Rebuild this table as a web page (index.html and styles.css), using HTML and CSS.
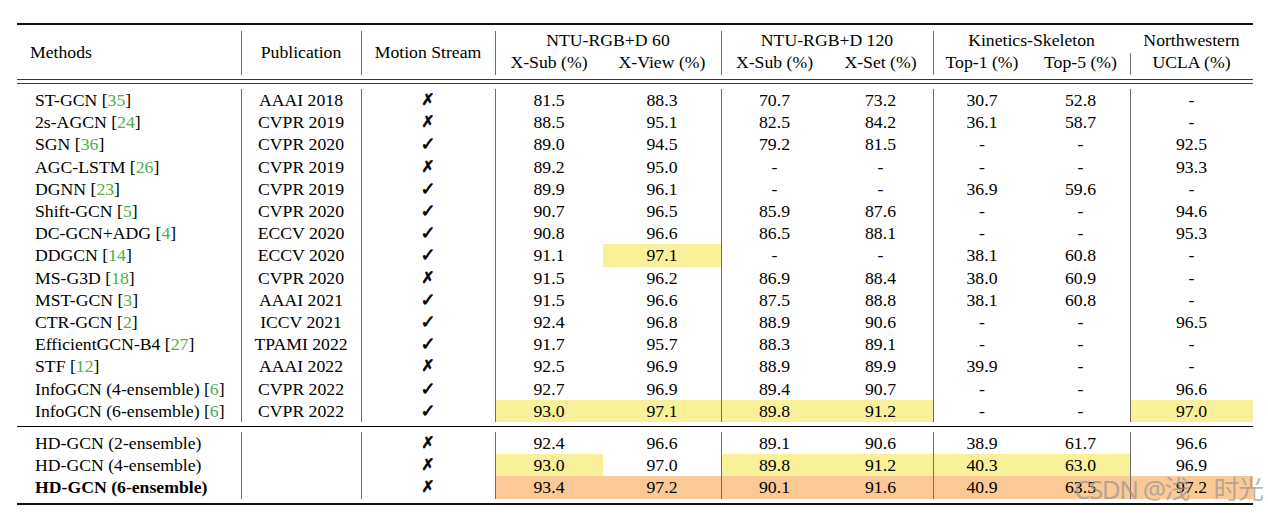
FILE: index.html
```html
<!DOCTYPE html>
<html lang="en">
<head>
<meta charset="utf-8">
<title>Skeleton action recognition results</title>
<link rel="stylesheet" href="styles.css">
</head>
<body>
<div class="page">
<table class="results">
<colgroup>
<col class="c-meth"><col class="c-pub"><col class="c-mot">
<col class="c-n60a"><col class="c-n60b"><col class="c-n120a"><col class="c-n120b">
<col class="c-k1"><col class="c-k5"><col class="c-ucla">
</colgroup>
<tbody>
<tr class="rule thick"><td colspan="10"></td></tr>
<tr class="sp sp6"><td colspan="10"></td></tr>
<tr class="head">
<th rowspan="2" class="h-meth">Methods</th>
<th rowspan="2" class="vl h-span">Publication</th>
<th rowspan="2" class="vl h-span">Motion Stream</th>
<th colspan="2" class="vl">NTU-RGB+D 60</th>
<th colspan="2" class="vl">NTU-RGB+D 120</th>
<th colspan="2" class="vl">Kinetics-Skeleton</th>
<th>Northwestern</th>
</tr>
<tr class="head">
<th class="vl">X-Sub (%)</th><th>X-View (%)</th>
<th class="vl">X-Sub (%)</th><th>X-Set (%)</th>
<th class="vl">Top-1 (%)</th><th>Top-5 (%)</th>
<th class="vl">UCLA (%)</th>
</tr>
<tr class="sp sp4"><td colspan="10"></td></tr>
<tr class="rule thin"><td colspan="10"></td></tr>
<tr class="sp sp3"><td colspan="10"></td></tr>
<tr class="rule thin"><td colspan="10"></td></tr>
<tr class="sp sp5"><td colspan="10"></td></tr>

<tr class="row"><td class="meth">ST-GCN <span class="cite">[<b>35</b>]</span></td><td class="vl">AAAI 2018</td><td class="vl mark x">✗</td><td class="vl">81.5</td><td>88.3</td><td class="vl">70.7</td><td>73.2</td><td class="vl">30.7</td><td>52.8</td><td class="vl">-</td></tr>
<tr class="row"><td class="meth">2s-AGCN <span class="cite">[<b>24</b>]</span></td><td class="vl">CVPR 2019</td><td class="vl mark x">✗</td><td class="vl">88.5</td><td>95.1</td><td class="vl">82.5</td><td>84.2</td><td class="vl">36.1</td><td>58.7</td><td class="vl">-</td></tr>
<tr class="row"><td class="meth">SGN <span class="cite">[<b>36</b>]</span></td><td class="vl">CVPR 2020</td><td class="vl mark ok">✓</td><td class="vl">89.0</td><td>94.5</td><td class="vl">79.2</td><td>81.5</td><td class="vl">-</td><td>-</td><td class="vl">92.5</td></tr>
<tr class="row"><td class="meth">AGC-LSTM <span class="cite">[<b>26</b>]</span></td><td class="vl">CVPR 2019</td><td class="vl mark x">✗</td><td class="vl">89.2</td><td>95.0</td><td class="vl">-</td><td>-</td><td class="vl">-</td><td>-</td><td class="vl">93.3</td></tr>
<tr class="row"><td class="meth">DGNN <span class="cite">[<b>23</b>]</span></td><td class="vl">CVPR 2019</td><td class="vl mark ok">✓</td><td class="vl">89.9</td><td>96.1</td><td class="vl">-</td><td>-</td><td class="vl">36.9</td><td>59.6</td><td class="vl">-</td></tr>
<tr class="row"><td class="meth">Shift-GCN <span class="cite">[<b>5</b>]</span></td><td class="vl">CVPR 2020</td><td class="vl mark ok">✓</td><td class="vl">90.7</td><td>96.5</td><td class="vl">85.9</td><td>87.6</td><td class="vl">-</td><td>-</td><td class="vl">94.6</td></tr>
<tr class="row"><td class="meth">DC-GCN+ADG <span class="cite">[<b>4</b>]</span></td><td class="vl">ECCV 2020</td><td class="vl mark ok">✓</td><td class="vl">90.8</td><td>96.6</td><td class="vl">86.5</td><td>88.1</td><td class="vl">-</td><td>-</td><td class="vl">95.3</td></tr>
<tr class="row"><td class="meth">DDGCN <span class="cite">[<b>14</b>]</span></td><td class="vl">ECCV 2020</td><td class="vl mark ok">✓</td><td class="vl">91.1</td><td class="y">97.1</td><td class="vl">-</td><td>-</td><td class="vl">38.1</td><td>60.8</td><td class="vl">-</td></tr>
<tr class="row"><td class="meth">MS-G3D <span class="cite">[<b>18</b>]</span></td><td class="vl">CVPR 2020</td><td class="vl mark x">✗</td><td class="vl">91.5</td><td>96.2</td><td class="vl">86.9</td><td>88.4</td><td class="vl">38.0</td><td>60.9</td><td class="vl">-</td></tr>
<tr class="row"><td class="meth">MST-GCN <span class="cite">[<b>3</b>]</span></td><td class="vl">AAAI 2021</td><td class="vl mark ok">✓</td><td class="vl">91.5</td><td>96.6</td><td class="vl">87.5</td><td>88.8</td><td class="vl">38.1</td><td>60.8</td><td class="vl">-</td></tr>
<tr class="row"><td class="meth">CTR-GCN <span class="cite">[<b>2</b>]</span></td><td class="vl">ICCV 2021</td><td class="vl mark ok">✓</td><td class="vl">92.4</td><td>96.8</td><td class="vl">88.9</td><td>90.6</td><td class="vl">-</td><td>-</td><td class="vl">96.5</td></tr>
<tr class="row"><td class="meth">EfficientGCN-B4 <span class="cite">[<b>27</b>]</span></td><td class="vl">TPAMI 2022</td><td class="vl mark ok">✓</td><td class="vl">91.7</td><td>95.7</td><td class="vl">88.3</td><td>89.1</td><td class="vl">-</td><td>-</td><td class="vl">-</td></tr>
<tr class="row"><td class="meth">STF <span class="cite">[<b>12</b>]</span></td><td class="vl">AAAI 2022</td><td class="vl mark x">✗</td><td class="vl">92.5</td><td>96.9</td><td class="vl">88.9</td><td>89.9</td><td class="vl">39.9</td><td>-</td><td class="vl">-</td></tr>
<tr class="row"><td class="meth">InfoGCN (4-ensemble) <span class="cite">[<b>6</b>]</span></td><td class="vl">CVPR 2022</td><td class="vl mark ok">✓</td><td class="vl">92.7</td><td>96.9</td><td class="vl">89.4</td><td>90.7</td><td class="vl">-</td><td>-</td><td class="vl">96.6</td></tr>
<tr class="row"><td class="meth">InfoGCN (6-ensemble) <span class="cite">[<b>6</b>]</span></td><td class="vl">CVPR 2022</td><td class="vl mark ok">✓</td><td class="vl y">93.0</td><td class="y">97.1</td><td class="vl y">89.8</td><td class="y">91.2</td><td class="vl">-</td><td>-</td><td class="vl y">97.0</td></tr>

<tr class="sp sp4"><td colspan="10"></td></tr>
<tr class="rule mid"><td colspan="10"></td></tr>
<tr class="sp sp5"><td colspan="10"></td></tr>

<tr class="row"><td class="meth">HD-GCN (2-ensemble)</td><td class="vl"></td><td class="vl mark x">✗</td><td class="vl">92.4</td><td>96.6</td><td class="vl">89.1</td><td>90.6</td><td class="vl">38.9</td><td>61.7</td><td class="vl">96.6</td></tr>
<tr class="row"><td class="meth">HD-GCN (4-ensemble)</td><td class="vl"></td><td class="vl mark x">✗</td><td class="vl y">93.0</td><td>97.0</td><td class="vl y">89.8</td><td class="y">91.2</td><td class="vl y">40.3</td><td class="y">63.0</td><td class="vl">96.9</td></tr>
<tr class="row"><td class="meth best">HD-GCN (6-ensemble)</td><td class="vl"></td><td class="vl mark x">✗</td><td class="vl o">93.4</td><td class="o">97.2</td><td class="vl o">90.1</td><td class="o">91.6</td><td class="vl o">40.9</td><td class="o">63.5</td><td class="vl o">97.2</td></tr>

<tr class="sp sp4"><td colspan="10"></td></tr>
<tr class="rule thick"><td colspan="10"></td></tr>
</tbody>
</table>
<div class="watermark">CSDN @浅　时光</div>
</div>
</body>
</html>
```

FILE: styles.css
```css
* { box-sizing: border-box; }

body {
  margin: 0;
  background: #ffffff;
  color: #000000;
  font-family: "Liberation Serif", "Times New Roman", serif;
}

.page {
  position: relative;
  width: 1268px;
  height: 513px;
  padding: 23px 0 0 17px;
  overflow: hidden;
}

.results {
  width: 1236px;
  table-layout: fixed;
  border-collapse: separate;
  border-spacing: 0;
  font-size: 17.7px;
}

.c-meth { width: 224px; }
.c-pub { width: 120px; }
.c-mot { width: 134px; }
.c-n60a { width: 108px; }
.c-n60b { width: 118px; }
.c-n120a { width: 107px; }
.c-n120b { width: 105px; }
.c-k1 { width: 98px; }
.c-k5 { width: 99px; }
.c-ucla { width: 123px; }

.results th,
.results td {
  padding: 0;
  text-align: center;
  white-space: nowrap;
  font-weight: normal;
}

/* horizontal rules and spacing rows */
.rule td,
.sp td {
  font-size: 0;
  line-height: 0;
}
.rule.thick td { height: 2px; background: #111111; }
.rule.thin td { height: 1px; background: #3a3a3a; }
.rule.mid td { height: 1px; background: #000000; }
.sp3 td { height: 3px; }
.sp4 td { height: 4px; }
.sp5 td { height: 5px; }
.sp6 td { height: 6px; }

/* header */
.head th {
  height: 22px;
  line-height: 18px;
  vertical-align: top;
}
.head th.h-meth,
.head th.h-span {
  vertical-align: middle;
  padding-bottom: 3px;
}
.head th.h-meth {
  text-align: left;
  padding-left: 13px;
}

/* body rows */
.row td {
  height: 22.2px;
  line-height: 22.2px;
  vertical-align: middle;
}
.row td.meth {
  text-align: left;
  padding-left: 18px;
}
.row td.best { font-weight: bold; }

.cite b {
  font-weight: normal;
  color: #4dae4a;
}

.mark {
  font-family: "DejaVu Sans", sans-serif;
  font-weight: normal;
}
.row td.mark.x {
  font-size: 16px;
  -webkit-text-stroke: 0.5px #000000;
}
.row td.mark.ok {
  font-size: 18px;
  -webkit-text-stroke: 0.7px #000000;
}

/* vertical separators */
.vl { box-shadow: inset 1px 0 0 #6e6e6e; }

/* highlighted results */
.y { background: #f8f199; }
.o { background: #fbc995; }

/* CSDN watermark */
.watermark {
  position: absolute;
  left: 1074px;
  top: 476px;
  font-family: "Noto Sans", "Noto Sans CJK SC", sans-serif;
  font-size: 26px;
  line-height: 1;
  letter-spacing: -1.5px;
  color: rgba(150, 150, 150, 0.7);
  white-space: nowrap;
}
```
